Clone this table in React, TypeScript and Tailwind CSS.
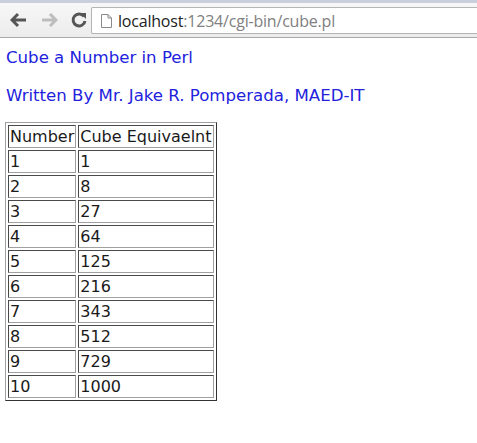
import React from "react";

const rows = [
  [1, 1],
  [2, 8],
  [3, 27],
  [4, 64],
  [5, 125],
  [6, 216],
  [7, 343],
  [8, 512],
  [9, 729],
  [10, 1000],
];

// inset cell border like an old border="1" table
const cell =
  "border border-t-[#4a4a4a] border-l-[#4a4a4a] border-b-[#a0a0a0] border-r-[#a0a0a0] p-px leading-[19px] text-left font-normal";

function Toolbar() {
  return (
    <div className="h-[38px] flex flex-col">
      <div className="h-[3px] bg-[#c9d0db]" />
      <div className="flex-1 flex items-center bg-gradient-to-b from-[#f7f7f7] to-[#ececec] border-b border-[#a9a9a9]">
        <div className="flex items-center gap-[12px] pl-[10px] w-[91px]">
          {/* back */}
          <svg width="18" height="16" viewBox="0 0 18 16">
            <path d="M8 2 L2 8 L8 14 M2.5 8 H16" stroke="#555" strokeWidth="3" fill="none" />
          </svg>
          {/* forward */}
          <svg width="18" height="16" viewBox="0 0 18 16">
            <path d="M10 2 L16 8 L10 14 M15.5 8 H2" stroke="#bdbdbd" strokeWidth="3" fill="none" />
          </svg>
          {/* reload */}
          <svg width="18" height="18" viewBox="0 0 18 18">
            <path d="M14 5.5 A6 6 0 1 0 15 10" stroke="#555" strokeWidth="3" fill="none" />
            <path d="M10 2 L16 2 L16 8 Z" fill="#555" />
          </svg>
        </div>
        <div className="flex-1 h-[27px] mt-px bg-white border border-[#b4b4b4] border-r-0 rounded-l-[2px] flex items-center pl-[9px] gap-[6px]">
          <svg width="11" height="14" viewBox="0 0 11 14">
            <path d="M0.5 0.5 H7 L10.5 4 V13.5 H0.5 Z M7 0.5 V4 H10.5" stroke="#8a8a8a" fill="#fff" />
          </svg>
          <span className="text-[16px] font-['Open_Sans',sans-serif] tracking-[-0.2px] text-[#222]">
            localhost<span className="text-[#808080]">:1234/cgi-bin/cube.pl</span>
          </span>
        </div>
      </div>
    </div>
  );
}

export default function App() {
  return (
    <div className="w-[477px] h-[443px] bg-white overflow-hidden font-['DejaVu_Sans',Verdana,sans-serif] text-[16px]">
      <Toolbar />
      <div className="pl-[5px]">
        <p className="mt-[10px] pl-px leading-[19px] text-[16.6px] text-[#2222dd]">Cube a Number in Perl</p>
        <p className="mt-[19px] pl-px leading-[19px] text-[16.6px] text-[#2222dd]">Written By Mr. Jake R. Pomperada, MAED-IT</p>
        <table className="mt-[17px] border border-t-[#a0a0a0] border-l-[#a0a0a0] border-b-[#333] border-r-[#333] border-separate border-spacing-[2px] text-[#1a1a1a]">
          <thead>
            <tr>
              <th className={cell}>Number</th>
              <th className={cell}>Cube Equivaelnt</th>
            </tr>
          </thead>
          <tbody>
            {rows.map(([n, c]) => (
              <tr key={n}>
                <td className={cell}>{n}</td>
                <td className={cell}>{c}</td>
              </tr>
            ))}
          </tbody>
        </table>
      </div>
    </div>
  );
}
